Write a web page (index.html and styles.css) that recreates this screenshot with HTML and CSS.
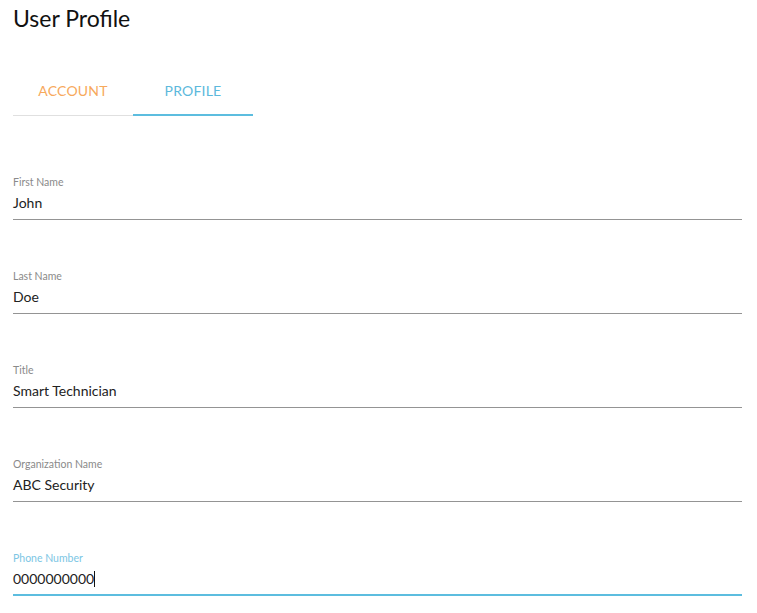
FILE: index.html
```html
<!DOCTYPE html>
<html lang="en">
<head>
    <meta charset="UTF-8">
    <meta name="viewport" content="width=device-width, initial-scale=1.0">
    <title>User Profile</title>
    <link rel="stylesheet" href="styles.css">
</head>
<body>
    <h1 class="page-title">User Profile</h1>

    <div class="tabs">
        <div class="tab tab-account">ACCOUNT</div>
        <div class="tab tab-profile active">PROFILE</div>
    </div>

    <form class="profile-form">
        <div class="field">
            <label class="field-label">First Name</label>
            <div class="field-input">John</div>
        </div>
        <div class="field">
            <label class="field-label">Last Name</label>
            <div class="field-input">Doe</div>
        </div>
        <div class="field">
            <label class="field-label">Title</label>
            <div class="field-input">Smart Technician</div>
        </div>
        <div class="field">
            <label class="field-label">Organization Name</label>
            <div class="field-input">ABC Security</div>
        </div>
        <div class="field focused">
            <label class="field-label">Phone Number</label>
            <div class="field-input">0000000000<span class="caret"></span></div>
        </div>
    </form>
</body>
</html>
```

FILE: styles.css
```css
body {
    font-family: Lato, "Open Sans", sans-serif;
    background: #fff;
    color: #222;
    margin: 0;
    padding: 0 15px 0 13px;
}
.page-title {
    font-size: 23px;
    font-weight: 400;
    color: #111;
    margin: 0;
    padding-top: 4px;
    line-height: 28px;
}
.tabs {
    display: flex;
    margin-top: 34px;
}
.tab {
    width: 120px;
    height: 49px;
    display: flex;
    align-items: center;
    justify-content: center;
    font-size: 14px;
    letter-spacing: 0.2px;
    border-bottom: 1px solid #e0e0e0;
}
.tab-account { color: #f7a95c; }
.tab-profile { color: #5cb9dc; }
.tab.active {
    border-bottom: 2px solid #5cbddf;
    height: 48px;
}
.profile-form {
    margin-top: 10px;
}
.field {
    height: 94px;
    display: flex;
    flex-direction: column;
    justify-content: flex-end;
}
.field-label {
    font-size: 10.5px;
    color: #8a8a8a;
    line-height: 14px;
}
.field-input {
    font-size: 14px;
    color: #222;
    line-height: 20px;
    padding: 4px 0 6px;
    border-bottom: 1px solid #949494;
}
.focused .field-label { color: #7cc6e4; }
.focused .field-input {
    border-bottom: 2px solid #5cbddf;
    padding-bottom: 5px;
}
.caret {
    display: inline-block;
    width: 1px;
    height: 16px;
    background: #111;
    vertical-align: -3px;
}
```
